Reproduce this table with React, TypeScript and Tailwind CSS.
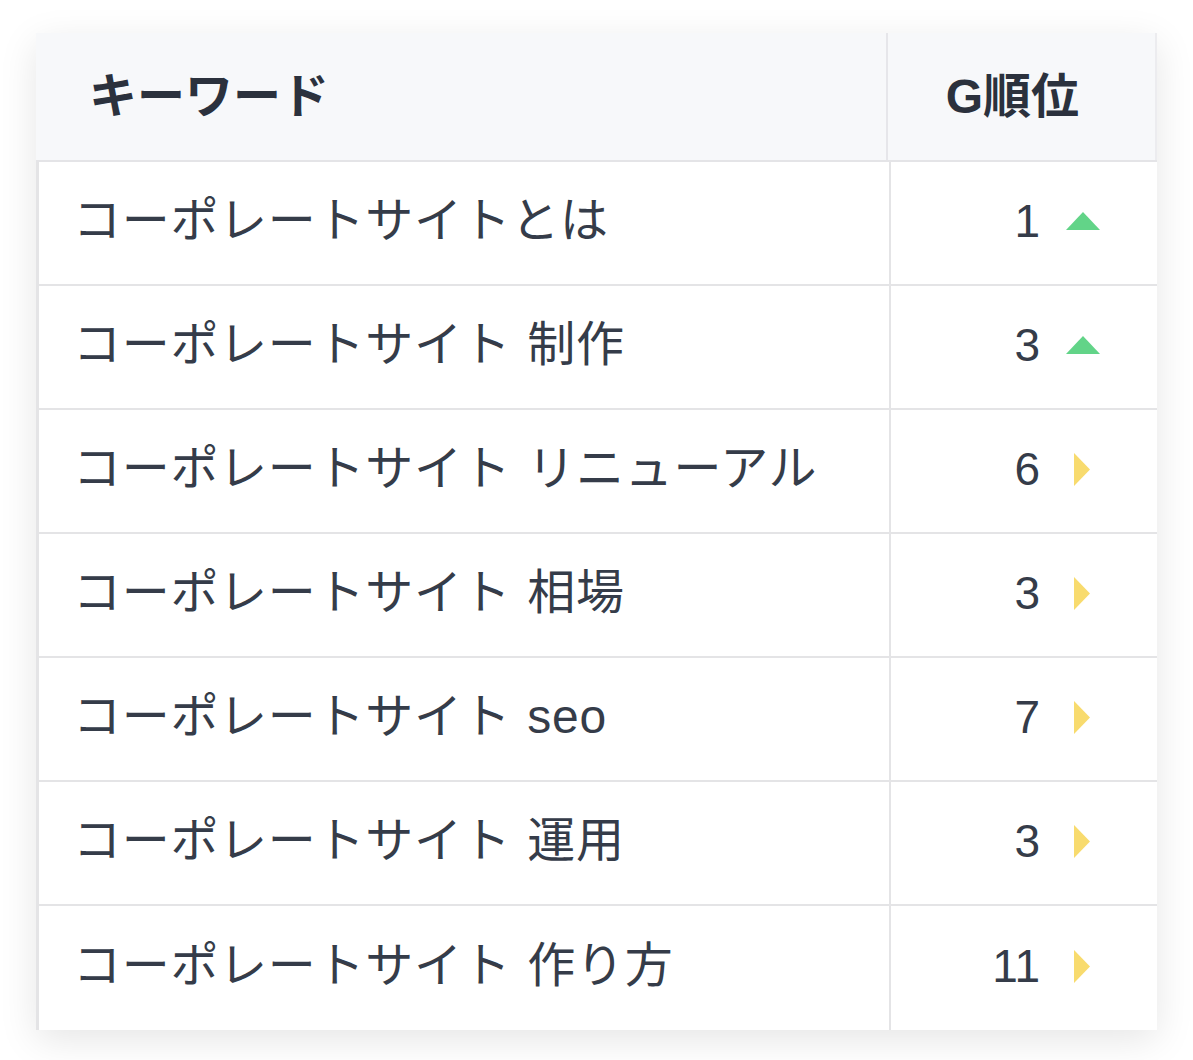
const rows: { kw: string; rank: number; trend: "up" | "flat" }[] = [
  { kw: "コーポレートサイトとは", rank: 1, trend: "up" },
  { kw: "コーポレートサイト 制作", rank: 3, trend: "up" },
  { kw: "コーポレートサイト リニューアル", rank: 6, trend: "flat" },
  { kw: "コーポレートサイト 相場", rank: 3, trend: "flat" },
  { kw: "コーポレートサイト seo", rank: 7, trend: "flat" },
  { kw: "コーポレートサイト 運用", rank: 3, trend: "flat" },
  { kw: "コーポレートサイト 作り方", rank: 11, trend: "flat" },
];

function Trend({ trend }: { trend: "up" | "flat" }) {
  return (
    <span className="flex h-[34px] w-[34px] items-center justify-center">
      {trend === "up" ? (
        <svg width="34" height="18" viewBox="0 0 34 18">
          <polygon points="17,0 34,18 0,18" fill="#62d488" />
        </svg>
      ) : (
        <svg width="16" height="33" viewBox="0 0 16 33" className="ml-[-2px]">
          <polygon points="0,0 16,16.5 0,33" fill="#f8db6e" />
        </svg>
      )}
    </span>
  );
}

export default function App() {
  return (
    <div
      className="min-h-[1060px] bg-white pl-[36px] pt-[33px]"
      style={{ fontFamily: '"Liberation Sans", "Noto Sans CJK JP", sans-serif' }}
    >
      <div className="w-[1121px] shadow-[0_10px_36px_rgba(0,0,0,0.1)]">
        <div className="flex h-[129px] border-b-2 border-[#e4e4e7] bg-[#f7f8fa] text-[48px] font-bold text-[#2b313d]">
          <div className="flex w-[852px] items-center border-r-2 border-[#e6e6ea] pl-[53px]">
            キーワード
          </div>
          <div className="flex flex-1 items-center justify-end border-r-2 border-[#ececef] pr-[76px]">
            G順位
          </div>
        </div>
        {rows.map((r, i) => (
          <div
            key={i}
            className={`flex h-[124px] border-l-[3px] border-[#e4e4e6] bg-white text-[#353c49] ${
              i < rows.length - 1 ? "border-b-2" : "h-[122px]"
            }`}
          >
            <div className="flex w-[852px] items-center border-r-2 border-[#e4e4e6] pl-[34px] pb-[4px] text-[48px] tracking-[0.7px] whitespace-pre [word-spacing:2px]">
              {r.kw}
            </div>
            <div className="flex flex-1 items-center justify-end gap-[26px] pr-[57px] pb-[4px] text-[46px]">
              <span>{r.rank}</span>
              <Trend trend={r.trend} />
            </div>
          </div>
        ))}
      </div>
    </div>
  );
}
